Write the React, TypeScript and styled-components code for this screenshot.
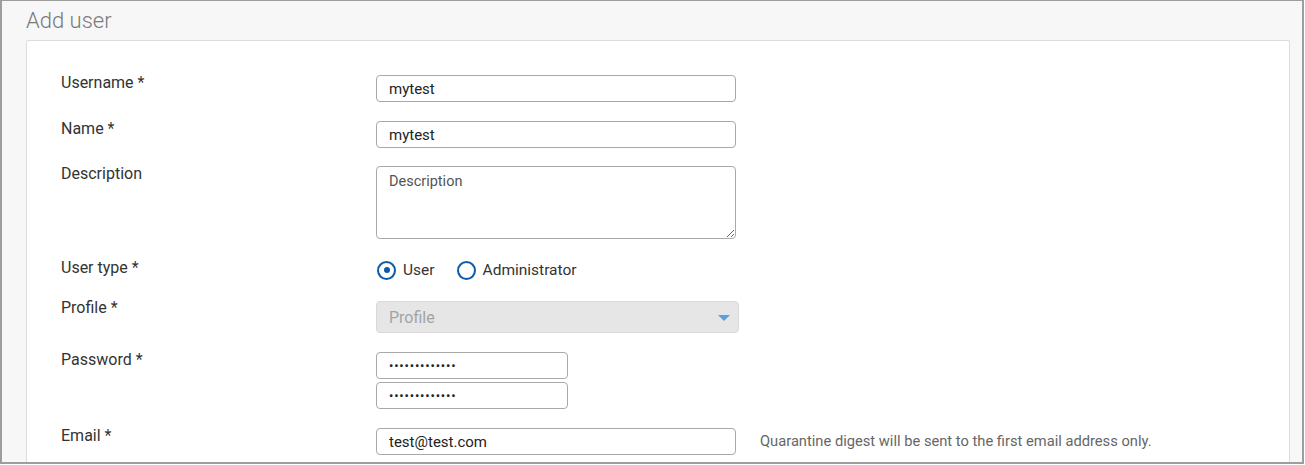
import React from "react";
import styled, { createGlobalStyle } from "styled-components";

const GlobalStyle = createGlobalStyle`
  html, body {
    margin: 0;
    padding: 0;
    background: #ffffff;
    font-family: Roboto, "Liberation Sans", Arial, sans-serif;
  }
`;

const Frame = styled.div`
  box-sizing: border-box;
  width: 1304px;
  height: 464px;
  border: 1px solid #9d9d9d;
  border-width: 1px 2px 2px 2px;
  background: #f7f7f7;
  padding: 0 12px 0 24px;
  overflow: hidden;
`;

const Title = styled.h2`
  margin: 0;
  height: 39px;
  line-height: 40px;
  font-size: 22px;
  font-weight: 300;
  color: #7a7a7a;
`;

const Card = styled.div`
  background: #ffffff;
  border: 1px solid #dcdcdc;
  border-bottom: none;
  border-radius: 2px 2px 0 0;
  padding: 34px 34px 40px;
  display: flex;
  flex-direction: column;
  gap: 19px;
`;

const Row = styled.div<{ $shift?: number }>`
  display: flex;
  align-items: flex-start;
  margin-top: ${(p) => p.$shift ?? 0}px;
`;

const Label = styled.div<{ $offset?: number }>`
  width: 315px;
  flex: none;
  margin-top: ${(p) => p.$offset ?? -2.5}px;
  font-size: 16px;
  line-height: 19px;
  color: #333333;
`;

const Field = styled.div`
  display: flex;
  flex-direction: column;
  gap: 3px;
`;

const TextInput = styled.input<{ $width?: number }>`
  box-sizing: border-box;
  width: ${(p) => p.$width ?? 360}px;
  height: 27px;
  border: 1px solid #a9a9a9;
  border-radius: 4px;
  padding: 0 12px;
  font-family: Roboto, "Liberation Sans", Arial, sans-serif;
  font-size: 15px;
  color: #222222;
  background: #ffffff;
  outline: none;

  &[type="password"] {
    font-size: 13px;
    letter-spacing: 0.8px;
  }
`;

const TextArea = styled.textarea`
  box-sizing: border-box;
  width: 360px;
  height: 73px;
  border: 1px solid #a9a9a9;
  border-radius: 4px;
  padding: 6px 12px;
  font-family: Roboto, "Liberation Sans", Arial, sans-serif;
  font-size: 14.5px;
  color: #222222;
  outline: none;

  &::placeholder {
    color: #555555;
  }
`;

const RadioGroup = styled.div`
  display: flex;
  align-items: center;
  gap: 21px;
  height: 24px;
`;

const RadioOption = styled.label`
  display: flex;
  align-items: center;
  gap: 7px;
  font-size: 15.5px;
  color: #333333;
  cursor: pointer;
`;

const RadioCircle = styled.span<{ $checked?: boolean }>`
  box-sizing: border-box;
  width: 19px;
  height: 19px;
  border-radius: 50%;
  border: 2.5px solid #0d5ba8;
  display: flex;
  align-items: center;
  justify-content: center;
  margin-left: 1px;

  &::after {
    content: "";
    width: 6px;
    height: 6px;
    border-radius: 50%;
    background: ${(p) => (p.$checked ? "#0d5ba8" : "transparent")};
  }
`;

const SelectBox = styled.div`
  box-sizing: border-box;
  width: 363px;
  height: 32px;
  border: 1px solid #d9d9d9;
  border-radius: 4px;
  background: #e6e6e6;
  display: flex;
  align-items: center;
  justify-content: space-between;
  padding: 0 8px 0 12px;
  font-size: 16px;
  color: #a3a3a3;
`;

const Caret = styled.span`
  width: 0;
  height: 0;
  border-left: 6px solid transparent;
  border-right: 6px solid transparent;
  border-top: 6px solid #5b9fdb;
  margin-top: 2px;
`;

const Hint = styled.span`
  margin-left: 24px;
  line-height: 27px;
  font-size: 14.7px;
  color: #666666;
`;

export default function App() {
  return (
    <>
      <GlobalStyle />
      <Frame>
        <Title>Add user</Title>
        <Card>
          <Row>
            <Label>Username *</Label>
            <TextInput defaultValue="mytest" />
          </Row>
          <Row>
            <Label>Name *</Label>
            <TextInput defaultValue="mytest" />
          </Row>
          <Row $shift={-1}>
            <Label>Description</Label>
            <TextArea placeholder="Description" />
          </Row>
          <Row>
            <Label $offset={0}>User type *</Label>
            <RadioGroup>
              <RadioOption>
                <RadioCircle $checked />
                User
              </RadioOption>
              <RadioOption>
                <RadioCircle />
                Administrator
              </RadioOption>
            </RadioGroup>
          </Row>
          <Row>
            <Label $offset={-3.5}>Profile *</Label>
            <SelectBox>
              Profile
              <Caret />
            </SelectBox>
          </Row>
          <Row>
            <Label>Password *</Label>
            <Field>
              <TextInput type="password" $width={192} defaultValue="abcdefghijklm" />
              <TextInput type="password" $width={192} defaultValue="abcdefghijklm" />
            </Field>
          </Row>
          <Row>
            <Label>Email *</Label>
            <TextInput defaultValue="test@test.com" />
            <Hint>Quarantine digest will be sent to the first email address only.</Hint>
          </Row>
        </Card>
      </Frame>
    </>
  );
}
